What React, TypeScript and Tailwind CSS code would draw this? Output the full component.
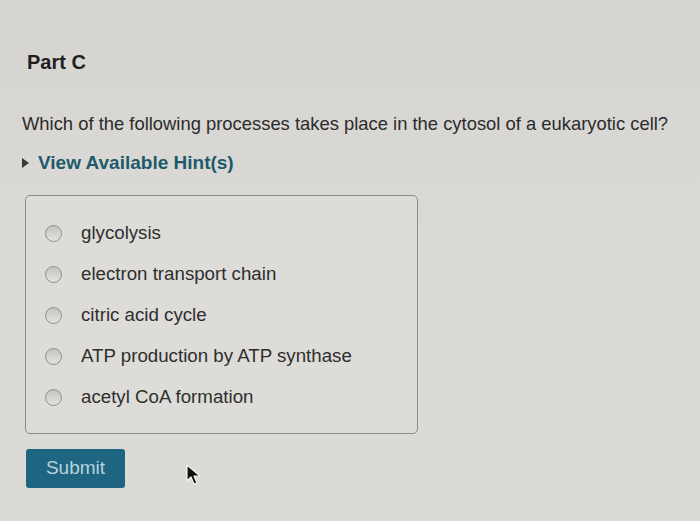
import React, { useState } from 'react';

const options = [
  'glycolysis',
  'electron transport chain',
  'citric acid cycle',
  'ATP production by ATP synthase',
  'acetyl CoA formation',
];

const Cursor: React.FC = () => (
  <svg width="18" height="22" viewBox="0 0 18 22" className="ml-[60px] mt-[15px]">
    <path d="M2 1 L2 17 L6 13 L9 20 L12 19 L9 12 L15 12 Z" fill="#111" stroke="#f2f2f2" strokeWidth="1.2" strokeLinejoin="round" />
  </svg>
);

const App: React.FC = () => {
  const [selected, setSelected] = useState<number | null>(null);

  return (
    <div
      className="w-[700px] h-[521px] overflow-hidden bg-gradient-to-b from-[#d6d4d1] via-[#dcdad6] to-[#dbdad5] text-[#2a2a2a]"
      style={{ fontFamily: '"Liberation Sans", Arial, sans-serif' }}
    >
      <div className="pl-[22px] pt-[50px]">
        <h2 className="pl-[5px] text-[20px] font-bold leading-[24px] text-[#1f1f1f]">Part C</h2>

        <p className="mt-[38px] text-[18.4px] leading-[24px] text-[#2b2b2b]">
          Which of the following processes takes place in the cytosol of a eukaryotic cell?
        </p>

        <button className="mt-[16px] flex items-center gap-[9px] text-[19px] font-bold leading-[22px] text-[#1d5a6b]">
          <svg width="7" height="10" viewBox="0 0 7 10">
            <path d="M0 0 L7 5 L0 10 Z" fill="#3a3a3a" />
          </svg>
          View Available Hint(s)
        </button>

        <div className="ml-[3px] mt-[21px] w-[393px] h-[239px] rounded-[5px] border border-[#8c8b88] bg-[#dddcd8] pl-[19px] pt-[25px]">
          <div className="flex flex-col gap-[17px]">
            {options.map((opt, i) => (
              <label key={opt} className="flex items-center gap-[19px] cursor-pointer" onClick={() => setSelected(i)}>
                <span className="w-[17px] h-[17px] rounded-full border-[1.5px] border-[#8f8e8b] bg-gradient-to-b from-[#c4c3bf] to-[#e4e3df] flex items-center justify-center">
                  {selected === i && <span className="w-[7px] h-[7px] rounded-full bg-[#1d5a6b]" />}
                </span>
                <span className="text-[18.7px] leading-[24px] text-[#2e2e2e]">{opt}</span>
              </label>
            ))}
          </div>
        </div>

        <div className="mt-[15px] flex items-start">
          <button className="ml-[4px] w-[99px] h-[39px] rounded-[3px] bg-[#1e6581] text-[19px] text-[#b9d3dc]">
            Submit
          </button>
          <Cursor />
        </div>
      </div>
    </div>
  );
};

export default App;
